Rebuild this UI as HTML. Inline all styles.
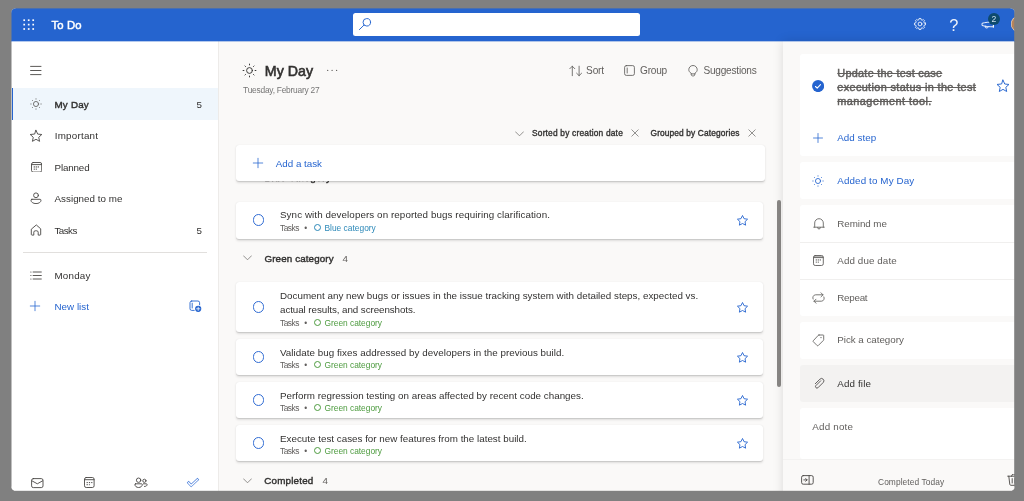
<!DOCTYPE html>
<html lang="en">
<head>
<meta charset="utf-8">
<title>To Do</title>
<style>
html,body{margin:0;padding:0}
body{width:1024px;height:501px;overflow:hidden;background:#808080;position:relative;font-family:"Liberation Sans",sans-serif}
#clip{position:absolute;left:11px;top:8px;width:1004px;height:483px;overflow:hidden;border-radius:5.5px;will-change:transform}
#win{position:absolute;left:-11px;top:-8px;width:1024px;height:501px;background:#faf9f8}
.edge{position:absolute;background:#808080}
.abs{position:absolute}
.t{position:absolute;white-space:pre;line-height:20px;height:20px;text-decoration-thickness:0.8px}
#hdr{position:absolute;left:0;top:0;width:1024px;height:41.3px;background:#2564cf}
#search{position:absolute;left:353px;top:13px;width:286.5px;height:22.5px;background:#fff;border-radius:2.5px}
#side{position:absolute;left:0;top:41px;width:218.2px;height:460px;background:#fff}
#sel{position:absolute;left:11.5px;top:88.3px;width:207px;height:31.7px;background:#eff6fc}
#selbar{position:absolute;left:11.5px;top:88.3px;width:1.6px;height:31.7px;background:#2564cf}
#sdiv{position:absolute;left:23px;top:252px;width:184px;height:1px;background:#e1dfdd}
#main{position:absolute;left:218.2px;top:41px;width:564px;height:460px;background:#faf9f8;border-left:1px solid #edebe9;box-sizing:border-box}
.card{position:absolute;background:#fff;border-radius:3px;box-shadow:0 1.1px 2.5px rgba(0,0,0,.11),0 0.2px 0.7px rgba(0,0,0,.1)}
.circ{position:absolute;width:11.5px;height:11.5px;box-sizing:border-box;border:0.95px solid #2f6bd3;border-radius:50%}
#dpanel{position:absolute;left:782.5px;top:41px;width:242px;height:460px;background:#faf9f8;box-shadow:0 0 10px rgba(0,0,0,.13)}
.dcard{position:absolute;left:800px;width:224px;background:#fff;border-radius:3px}
.ddiv{position:absolute;left:800px;width:224px;height:1px;background:#f0efee}
#scroll{position:absolute;left:777.3px;top:200px;width:3.4px;height:186.5px;background:#8a8886;border-radius:2px}
</style>
</head>
<body>
<div id="clip"><div id="win">
<div id="hdr"></div>
<div class="abs" style="left:0;top:41px;width:1024px;height:1px;background:#2564cf;opacity:.35;z-index:5"></div>
<div id="search"></div>
<div id="side"></div>
<div id="sel"></div><div id="selbar"></div><div id="sdiv"></div>
<div id="main"></div>
<!--ADDTASK-->
<div class="abs" style="left:236px;top:181px;width:529px;height:8px;overflow:hidden"><span class="t" style="left:28.5px;top:-13.2px;font-size:9.8px;font-weight:400;-webkit-text-stroke:0.4px #323130;color:#323130;letter-spacing:0.55px">Blue category</span></div>
<div class="card" style="left:236px;top:145px;width:529px;height:36px"></div>
<div class="card" style="left:236px;top:202px;width:527px;height:36.7px"></div>
<div class="circ" style="left:252.64999999999998px;top:214.29999999999998px"></div>
<svg class="abs" style="left:735.5px;top:213.85px" width="13" height="13" viewBox="0 0 20 20"><path d="M10 2.3l2.4 4.9 5.4.8-3.9 3.8.9 5.4L10 14.6l-4.8 2.6.9-5.4L2.2 8l5.4-.8z" fill="none" stroke="#2564cf" stroke-width="1.4" stroke-linejoin="round"/></svg>
<div class="abs" style="left:314px;top:224.2px;width:7px;height:7px;box-sizing:border-box;border:1px solid #2b88b8;border-radius:50%"></div>
<div class="card" style="left:236px;top:282.45px;width:527px;height:50px"></div>
<div class="circ" style="left:252.64999999999998px;top:301.4px"></div>
<svg class="abs" style="left:735.5px;top:300.95px" width="13" height="13" viewBox="0 0 20 20"><path d="M10 2.3l2.4 4.9 5.4.8-3.9 3.8.9 5.4L10 14.6l-4.8 2.6.9-5.4L2.2 8l5.4-.8z" fill="none" stroke="#2564cf" stroke-width="1.4" stroke-linejoin="round"/></svg>
<div class="abs" style="left:314px;top:318.65px;width:7px;height:7px;box-sizing:border-box;border:1px solid #4d9b3f;border-radius:50%"></div>
<div class="card" style="left:236px;top:339.2px;width:527px;height:36.3px"></div>
<div class="circ" style="left:252.64999999999998px;top:351.29999999999995px"></div>
<svg class="abs" style="left:735.5px;top:350.84999999999997px" width="13" height="13" viewBox="0 0 20 20"><path d="M10 2.3l2.4 4.9 5.4.8-3.9 3.8.9 5.4L10 14.6l-4.8 2.6.9-5.4L2.2 8l5.4-.8z" fill="none" stroke="#2564cf" stroke-width="1.4" stroke-linejoin="round"/></svg>
<div class="abs" style="left:314px;top:361.4px;width:7px;height:7px;box-sizing:border-box;border:1px solid #4d9b3f;border-radius:50%"></div>
<div class="card" style="left:236px;top:382.2px;width:527px;height:36.3px"></div>
<div class="circ" style="left:252.64999999999998px;top:394.29999999999995px"></div>
<svg class="abs" style="left:735.5px;top:393.84999999999997px" width="13" height="13" viewBox="0 0 20 20"><path d="M10 2.3l2.4 4.9 5.4.8-3.9 3.8.9 5.4L10 14.6l-4.8 2.6.9-5.4L2.2 8l5.4-.8z" fill="none" stroke="#2564cf" stroke-width="1.4" stroke-linejoin="round"/></svg>
<div class="abs" style="left:314px;top:404.4px;width:7px;height:7px;box-sizing:border-box;border:1px solid #4d9b3f;border-radius:50%"></div>
<div class="card" style="left:236px;top:425.2px;width:527px;height:36.3px"></div>
<div class="circ" style="left:252.64999999999998px;top:437.29999999999995px"></div>
<svg class="abs" style="left:735.5px;top:436.84999999999997px" width="13" height="13" viewBox="0 0 20 20"><path d="M10 2.3l2.4 4.9 5.4.8-3.9 3.8.9 5.4L10 14.6l-4.8 2.6.9-5.4L2.2 8l5.4-.8z" fill="none" stroke="#2564cf" stroke-width="1.4" stroke-linejoin="round"/></svg>
<div class="abs" style="left:314px;top:447.4px;width:7px;height:7px;box-sizing:border-box;border:1px solid #4d9b3f;border-radius:50%"></div>
<div id="scroll"></div>
<div id="dpanel"></div>
<div class="dcard" style="top:53.8px;height:102px"></div>
<div class="dcard" style="top:162px;height:36.8px"></div>
<div class="dcard" style="top:205px;height:111.3px"></div>
<div class="ddiv" style="top:242px"></div>
<div class="ddiv" style="top:279px"></div>
<div class="dcard" style="top:321.8px;height:37px"></div>
<div class="dcard" style="top:364.5px;height:37px;background:#f3f2f1"></div>
<div class="dcard" style="top:408px;height:51px"></div>
<div class="abs" style="left:782.5px;top:459.3px;width:242px;height:1px;background:#f3f2f1"></div>
<svg class="abs" style="left:22.6px;top:18.5px" width="12" height="12" viewBox="0 0 12 12" fill="none" stroke-linecap="round" stroke-linejoin="round"><rect x="0.35" y="0.35" width="1.7" height="1.7" fill="#fff"/><rect x="0.35" y="4.75" width="1.7" height="1.7" fill="#fff"/><rect x="0.35" y="9.15" width="1.7" height="1.7" fill="#fff"/><rect x="4.85" y="0.35" width="1.7" height="1.7" fill="#fff"/><rect x="4.85" y="4.75" width="1.7" height="1.7" fill="#fff"/><rect x="4.85" y="9.15" width="1.7" height="1.7" fill="#fff"/><rect x="9.35" y="0.35" width="1.7" height="1.7" fill="#fff"/><rect x="9.35" y="4.75" width="1.7" height="1.7" fill="#fff"/><rect x="9.35" y="9.15" width="1.7" height="1.7" fill="#fff"/></svg>
<svg class="abs" style="left:356px;top:14px" width="18" height="18" viewBox="0 0 18 18" fill="none" stroke-linecap="round" stroke-linejoin="round"><circle cx="10.8" cy="8.3" r="3.75" stroke="#2564cf" stroke-width="0.95"/><path d="M8 11.1L3.4 15.6" stroke="#2564cf" stroke-width="0.95"/></svg>
<svg class="abs" style="left:912.7px;top:17px" width="14" height="14" viewBox="0 0 14 14" fill="none" stroke-linecap="round" stroke-linejoin="round"><path d="M12.53 6.12L12.53 7.88L11.26 8.09L10.79 9.24L11.53 10.29L10.29 11.53L9.24 10.79L8.09 11.26L7.88 12.53L6.12 12.53L5.91 11.26L4.76 10.79L3.71 11.53L2.47 10.29L3.21 9.24L2.74 8.09L1.47 7.88L1.47 6.12L2.74 5.91L3.21 4.76L2.47 3.71L3.71 2.47L4.76 3.21L5.91 2.74L6.12 1.47L7.88 1.47L8.09 2.74L9.24 3.21L10.29 2.47L11.53 3.71L10.79 4.76L11.26 5.91Z" stroke="#fff" stroke-width="0.85"/><circle cx="7" cy="7" r="1.9" stroke="#fff" stroke-width="0.85"/></svg>
<svg class="abs" style="left:980px;top:16px" width="18" height="16" viewBox="0 0 18 16" fill="none" stroke-linecap="round" stroke-linejoin="round"><path d="M2.4 7.2C5 6.400 9 6 13.400 6V10.800C9 10.800 5 10.400 2.400 9.600Z" stroke="#fff" stroke-width="0.9"/><path d="M5.2 10.1v1.1c0 .9 2.6 1.3 3 .1" stroke="#fff" stroke-width="0.9"/><path d="M13.4 8v3.4" stroke="#fff" stroke-width="0.9"/></svg>
<div class="abs" style="left:988px;top:13px;width:11.8px;height:11.8px;border-radius:50%;background:#0d4a6e"></div>
<div class="abs" style="left:1011.2px;top:16.2px;width:15.6px;height:15.6px;border-radius:50%;background:#b5835a;box-shadow:inset 0 0 0 0.6px #e8d5c4"></div>
<svg class="abs" style="left:30px;top:65px" width="12" height="11" viewBox="0 0 12 11" fill="none" stroke-linecap="round" stroke-linejoin="round"><path d="M0.2 1.4h11.2M0.2 5.5h11.2M0.2 9.6h11.2" stroke="#484644" stroke-width="0.9" stroke-linecap="butt"/></svg>
<svg class="abs" style="left:29.700000000000003px;top:98px" width="12" height="12" viewBox="0 0 12 12" fill="none" stroke-linecap="round" stroke-linejoin="round"><circle cx="6" cy="6" r="2.55" stroke="#605e5c" stroke-width="0.85"/><path d="M10.50 6.00L11.60 6.00M9.18 9.18L9.96 9.96M6.00 10.50L6.00 11.60M2.82 9.18L2.04 9.96M1.50 6.00L0.40 6.00M2.82 2.82L2.04 2.04M6.00 1.50L6.00 0.40M9.18 2.82L9.96 2.04" stroke="#605e5c" stroke-width="0.85" stroke-linecap="butt"/></svg>
<svg class="abs" style="left:242.3px;top:62.900000000000006px" width="15.0" height="15.0" viewBox="0 0 15.0 15.0" fill="none" stroke-linecap="round" stroke-linejoin="round"><circle cx="7.5" cy="7.5" r="2.9" stroke="#323130" stroke-width="0.95"/><path d="M12.70 7.50L14.30 7.50M11.18 11.18L12.31 12.31M7.50 12.70L7.50 14.30M3.82 11.18L2.69 12.31M2.30 7.50L0.70 7.50M3.82 3.82L2.69 2.69M7.50 2.30L7.50 0.70M11.18 3.82L12.31 2.69" stroke="#323130" stroke-width="0.95" stroke-linecap="butt"/></svg>
<svg class="abs" style="left:812.4px;top:174.6px" width="12" height="12" viewBox="0 0 12 12" fill="none" stroke-linecap="round" stroke-linejoin="round"><circle cx="6" cy="6" r="2.55" stroke="#2564cf" stroke-width="0.85"/><path d="M10.50 6.00L11.60 6.00M9.18 9.18L9.96 9.96M6.00 10.50L6.00 11.60M2.82 9.18L2.04 9.96M1.50 6.00L0.40 6.00M2.82 2.82L2.04 2.04M6.00 1.50L6.00 0.40M9.18 2.82L9.96 2.04" stroke="#2564cf" stroke-width="0.85" stroke-linecap="butt"/></svg>
<svg class="abs" style="left:28.700000000000003px;top:128.8px" width="14" height="14" viewBox="0 0 14 14" fill="none" stroke-linecap="round" stroke-linejoin="round"><path d="M7.00 1.30L8.69 5.08L12.80 5.51L9.73 8.29L10.59 12.34L7.00 10.27L3.41 12.34L4.27 8.29L1.20 5.51L5.31 5.08Z" stroke="#484644" stroke-width="0.9"/></svg>
<svg class="abs" style="left:30.5px;top:161.9px" width="11.2" height="10.6" viewBox="0 0 11.2 10.6" fill="none" stroke-linecap="round" stroke-linejoin="round"><rect x="0.5" y="0.5" width="10.2" height="9.6" rx="1.7" stroke="#484644" stroke-width="0.9"/><path d="M0.5 2.6H10.7" stroke="#484644" stroke-width="0.9"/><circle cx="3.3" cy="4.9" r="0.7" fill="#484644"/><circle cx="5.3" cy="4.9" r="0.7" fill="#484644"/><circle cx="7.3" cy="4.9" r="0.7" fill="#484644"/><circle cx="3.3" cy="7.1" r="0.7" fill="#484644"/><circle cx="5.3" cy="7.1" r="0.7" fill="#484644"/></svg>
<svg class="abs" style="left:813px;top:255px" width="10.8" height="11" viewBox="0 0 10.8 11" fill="none" stroke-linecap="round" stroke-linejoin="round"><rect x="0.5" y="0.5" width="9.8" height="10" rx="1.7" stroke="#605e5c" stroke-width="0.9"/><path d="M0.5 2.6H10.3" stroke="#605e5c" stroke-width="0.9"/><rect x="0.9" y="0.9" width="9.0" height="1.6" fill="#605e5c" opacity="0.45"/><circle cx="3.3" cy="4.9" r="0.7" fill="#605e5c"/><circle cx="5.3" cy="4.9" r="0.7" fill="#605e5c"/><circle cx="7.3" cy="4.9" r="0.7" fill="#605e5c"/><circle cx="3.3" cy="7.1" r="0.7" fill="#605e5c"/><circle cx="5.3" cy="7.1" r="0.7" fill="#605e5c"/></svg>
<svg class="abs" style="left:29.7px;top:192px" width="12.0" height="12.0" viewBox="0 0 12 12" fill="none" stroke-linecap="round" stroke-linejoin="round"><circle cx="6" cy="3.3" r="2.4" stroke="#484644" stroke-width="0.9"/><path d="M1.9 7.3h8.2c.5 0 .9.4.9.9c0 2-2.2 3.4-5 3.4s-5-1.400-5-3.4c0-.5.400-.9.900-.9z" stroke="#484644" stroke-width="0.9"/></svg>
<svg class="abs" style="left:29.7px;top:223.5px" width="12" height="12" viewBox="0 0 12 12" fill="none" stroke-linecap="round" stroke-linejoin="round"><path d="M6 1.200L1.300 5.200V10.400c0 .4.300.7.700.7H3.800V8.200c0-.8.600-1.400 1.400-1.400H6.800c.8 0 1.400.600 1.400 1.400V11.100H10c.4 0 .7-.3.700-.7V5.200Z" stroke="#484644" stroke-width="0.9"/></svg>
<svg class="abs" style="left:30px;top:270.5px" width="12" height="9" viewBox="0 0 12 9" fill="none" stroke-linecap="round" stroke-linejoin="round"><path d="M3.1 1h8.200M3.100 4.500h8.200M3.100 8h8.200" stroke="#484644" stroke-width="0.9"/><circle cx="0.900" cy="1" r="0.6" fill="#484644"/><circle cx="0.9" cy="4.5" r="0.6" fill="#484644"/><circle cx="0.9" cy="8" r="0.6" fill="#484644"/></svg>
<svg class="abs" style="left:29.4px;top:300.2px" width="12" height="12" viewBox="0 0 12 12" fill="none" stroke-linecap="round" stroke-linejoin="round"><path d="M0.9000000000000004 6H11.1M6 0.9000000000000004V11.1" stroke="#2564cf" stroke-width="0.78" stroke-linecap="butt"/></svg>
<svg class="abs" style="left:252.10000000000002px;top:157.2px" width="12" height="12" viewBox="0 0 12 12" fill="none" stroke-linecap="round" stroke-linejoin="round"><path d="M0.9000000000000004 6H11.1M6 0.9000000000000004V11.1" stroke="#2564cf" stroke-width="0.78" stroke-linecap="butt"/></svg>
<svg class="abs" style="left:812.1px;top:131.5px" width="12" height="12" viewBox="0 0 12 12" fill="none" stroke-linecap="round" stroke-linejoin="round"><path d="M1.0999999999999996 6H10.9M6 1.0999999999999996V10.9" stroke="#2564cf" stroke-width="0.78" stroke-linecap="butt"/></svg>
<svg class="abs" style="left:188.5px;top:299.5px" width="14" height="14" viewBox="0 0 14 14" fill="none" stroke-linecap="round" stroke-linejoin="round"><rect x="1" y="1" width="9.600" height="9.400" rx="1.7" stroke="#2564cf" stroke-width="0.9"/><path d="M3.200 3.200V8" stroke="#2564cf" stroke-width="0.9"/><circle cx="9.200" cy="8.800" r="3.900" fill="#fff"/><circle cx="9.200" cy="8.800" r="3.100" fill="#2564cf"/><path d="M7.600 8.800h3.200M9.200 7.200v3.200" stroke="#fff" stroke-width="0.800"/></svg>
<svg class="abs" style="left:30.7px;top:477.7px" width="13" height="11" viewBox="0 0 13 11" fill="none" stroke-linecap="round" stroke-linejoin="round"><rect x="0.6" y="0.6" width="11.400" height="9" rx="1.700" stroke="#484644" stroke-width="0.9"/><path d="M0.900 2.800L6.300 5.800L11.700 2.800" stroke="#484644" stroke-width="0.9"/></svg>
<svg class="abs" style="left:83.6px;top:476.8px" width="11" height="12" viewBox="0 0 11 12" fill="none" stroke-linecap="round" stroke-linejoin="round"><rect x="0.5" y="0.5" width="9.600" height="10" rx="1.700" stroke="#484644" stroke-width="0.9"/><path d="M0.500 2.700H10.100" stroke="#484644" stroke-width="0.9"/><path d="M2.600 5.600H8.400M2.600 7.700H5.800" stroke="#484644" stroke-width="1" stroke-dasharray="1.200 1.100" stroke-linecap="butt"/></svg>
<svg class="abs" style="left:134px;top:476.8px" width="14" height="12" viewBox="0 0 14 12" fill="none" stroke-linecap="round" stroke-linejoin="round"><circle cx="4.600" cy="3.200" r="2.200" stroke="#484644" stroke-width="0.9"/><path d="M1.600 6.800H7.600c.4 0 .7.300.7.700c0 1.700-1.600 3-3.700 3s-3.700-1.300-3.700-3c0-.4.300-.7.700-.7z" stroke="#484644" stroke-width="0.9"/><circle cx="10.400" cy="3.800" r="1.600" stroke="#484644" stroke-width="0.9"/><path d="M9.400 6.800h3c.4 0 .7.300.7.700c0 1.200-1 2-2.600 2" stroke="#484644" stroke-width="0.9"/></svg>
<svg class="abs" style="left:186px;top:477px" width="14" height="12" viewBox="0 0 14 12" fill="none" stroke-linecap="round" stroke-linejoin="round"><path d="M2.600 5.700L5.200 8.500L11.400 2.700" stroke="#4a7fdb" stroke-width="2.600" stroke-linecap="square" stroke-linejoin="miter"/><path d="M2.600 5.700L5.200 8.500L11.400 2.700" stroke="#fff" stroke-width="1.250" stroke-linecap="square" stroke-linejoin="miter"/></svg>
<svg class="abs" style="left:326px;top:69px" width="13" height="3" viewBox="0 0 13 3"><circle cx="1.7" cy="1.400" r="0.65" fill="#605e5c"/><circle cx="6.100" cy="1.400" r="0.65" fill="#605e5c"/><circle cx="10.600" cy="1.400" r="0.65" fill="#605e5c"/></svg>
<svg class="abs" style="left:569px;top:65.1px" width="14" height="12" viewBox="0 0 14 12" fill="none" stroke-linecap="round" stroke-linejoin="round"><path d="M3.300 10.700V1.200M0.800 3.700L3.300 1.200L5.800 3.700M10.100 1.200V10.700M7.600 8.200L10.100 10.700L12.600 8.200" stroke="#605e5c" stroke-width="0.85"/></svg>
<svg class="abs" style="left:624.3px;top:65.4px" width="11" height="11" viewBox="0 0 11 11" fill="none" stroke-linecap="round" stroke-linejoin="round"><rect x="0.6" y="0.6" width="9.800" height="9.800" rx="1.700" stroke="#605e5c" stroke-width="0.85"/><path d="M3.200 3V8" stroke="#605e5c" stroke-width="0.85"/></svg>
<svg class="abs" style="left:688px;top:65px" width="10" height="12" viewBox="0 0 10 12" fill="none" stroke-linecap="round" stroke-linejoin="round"><path d="M3 8.200C1.600 7.300 0.800 6.100 0.800 4.700a4.200 4.200 0 0 1 8.400 0C9.200 6.100 8.400 7.300 7 8.200L6.700 9.900c-.1.600-.5 1-1.100 1H4.400c-.6 0-1-.4-1.100-1Z M3.200 8.900H6.800" stroke="#605e5c" stroke-width="0.85"/></svg>
<svg class="abs" style="left:515.2px;top:130.5px" width="9" height="6" viewBox="0 0 9 6" fill="none" stroke-linecap="round" stroke-linejoin="round"><path d="M0.500 0.800L4.500 4.800L8.500 0.800" stroke="#797775" stroke-width="0.8"/></svg>
<svg class="abs" style="left:242.8px;top:255.3px" width="9" height="6" viewBox="0 0 9 6" fill="none" stroke-linecap="round" stroke-linejoin="round"><path d="M0.500 0.800L4.500 4.800L8.500 0.800" stroke="#797775" stroke-width="0.8"/></svg>
<svg class="abs" style="left:242.8px;top:478.3px" width="9" height="6" viewBox="0 0 9 6" fill="none" stroke-linecap="round" stroke-linejoin="round"><path d="M0.500 0.800L4.500 4.800L8.500 0.800" stroke="#797775" stroke-width="0.8"/></svg>
<svg class="abs" style="left:631.4px;top:129.2px" width="8" height="8" viewBox="0 0 8 8" fill="none" stroke-linecap="round" stroke-linejoin="round"><path d="M0.800 0.800L7.200 7.200M7.200 0.800L0.800 7.200" stroke="#797775" stroke-width="0.8"/></svg>
<svg class="abs" style="left:748px;top:129.2px" width="8" height="8" viewBox="0 0 8 8" fill="none" stroke-linecap="round" stroke-linejoin="round"><path d="M0.800 0.800L7.200 7.200M7.200 0.800L0.800 7.200" stroke="#797775" stroke-width="0.8"/></svg>
<svg class="abs" style="left:812.3px;top:79.900px" width="12.200" height="12.200" viewBox="0 0 12.2 12.2" fill="none"><circle cx="6.100" cy="6.100" r="6.050" fill="#2564cf"/><path d="M3.500 6.500L5.200 8.100L8.500 4.600" stroke="#fff" stroke-width="1.100" stroke-linecap="round" stroke-linejoin="round"/></svg>
<svg class="abs" style="left:996.3px;top:79.4px" width="14" height="14" viewBox="0 0 14 14" fill="none" stroke-linecap="round" stroke-linejoin="round"><path d="M7.00 1.10L8.74 5.00L12.99 5.45L9.82 8.31L10.70 12.50L7.00 10.36L3.30 12.50L4.18 8.31L1.01 5.45L5.26 5.00Z" stroke="#2564cf" stroke-width="0.95"/></svg>
<svg class="abs" style="left:812.6px;top:217.5px" width="12" height="13" viewBox="0 0 12 13" fill="none" stroke-linecap="round" stroke-linejoin="round"><path d="M1.700 9.200V5a4.300 4.300 0 0 1 8.600 0V9.200M0.700 9.200H11.300M4.600 9.600a1.400 1.400 0 0 0 2.800 0" stroke="#605e5c" stroke-width="0.85"/></svg>
<svg class="abs" style="left:811.8px;top:291.5px" width="13" height="12" viewBox="0 0 13 12" fill="none" stroke-linecap="round" stroke-linejoin="round"><path d="M9 0.800L11 2.800L9 4.800M11 2.800H3.600A2.900 2.900 0 0 0 1.100 7.100M4 11.200L2 9.200L4 7.200M2 9.200H9.400A2.900 2.900 0 0 0 11.900 4.900" stroke="#605e5c" stroke-width="0.85"/></svg>
<svg class="abs" style="left:812px;top:334px" width="13" height="13" viewBox="0 0 13 13" fill="none" stroke-linecap="round" stroke-linejoin="round"><path d="M7 1H11.200c.3 0 .5.200.5.500V5.700c0 .3-.1.500-.3.700L6.200 11.600c-.3.300-.700.300-1 0L1.300 7.700c-.3-.3-.3-.7 0-1L6.300 1.300C6.500 1.100 6.700 1 7 1Z" stroke="#605e5c" stroke-width="0.85"/><circle cx="9" cy="3.600" r="0.65" fill="#605e5c"/></svg>
<svg class="abs" style="left:812.5px;top:376.5px" width="13" height="13" viewBox="0 0 13 13" fill="none" stroke-linecap="round" stroke-linejoin="round"><path d="M2 6.400L6.600 1.900A2.300 2.300 0 0 1 9.900 5.200L4.600 10.500A1.500 1.500 0 0 1 2.500 8.400L7.400 3.500" stroke="#484644" stroke-width="0.85" transform="translate(0.3,0.3)"/></svg>
<svg class="abs" style="left:800.6px;top:475px" width="13" height="10" viewBox="0 0 13 10" fill="none" stroke-linecap="round" stroke-linejoin="round"><rect x="0.6" y="0.6" width="11.600" height="8.600" rx="1.600" stroke="#484644" stroke-width="0.9"/><path d="M8.100 0.600V9.200M2.800 4.900H6M4.700 3.500L6.100 4.900L4.700 6.300" stroke="#484644" stroke-width="0.9"/></svg>
<svg class="abs" style="left:1006.5px;top:473.5px" width="13" height="12" viewBox="0 0 13 12" fill="none" stroke-linecap="round" stroke-linejoin="round"><path d="M0.700 2.200H12.300M4.500 2.200a2 2 0 0 1 4 0M1.800 2.200L2.800 10.400c.1.500.5.900 1 .9H9.200c.5 0 .9-.4 1-.9L11.200 2.200M5.200 4.600V9M7.800 4.600V9" stroke="#484644" stroke-width="0.9"/></svg>
<span class="t" style="left:51.6px;top:15.28px;font-size:11.3px;font-weight:400;color:#ffffff;letter-spacing:0.097px;-webkit-text-stroke:0.47px #ffffff;">To Do</span>
<span class="t" style="left:54.5px;top:94.60px;font-size:9.8px;font-weight:400;color:#323130;letter-spacing:0.214px;-webkit-text-stroke:0.41px #323130;">My Day</span>
<span class="t" style="left:54.7px;top:126.10px;font-size:9.8px;font-weight:400;color:#323130;letter-spacing:0.245px;">Important</span>
<span class="t" style="left:54.5px;top:157.60px;font-size:9.8px;font-weight:400;color:#323130;letter-spacing:-0.138px;">Planned</span>
<span class="t" style="left:54.5px;top:189.10px;font-size:9.8px;font-weight:400;color:#323130;letter-spacing:0.033px;">Assigned to me</span>
<span class="t" style="left:54.5px;top:220.60px;font-size:9.8px;font-weight:400;color:#323130;letter-spacing:-0.559px;">Tasks</span>
<span class="t" style="left:54.5px;top:265.60px;font-size:9.8px;font-weight:400;color:#323130;letter-spacing:0.190px;">Monday</span>
<span class="t" style="left:54.5px;top:296.60px;font-size:9.8px;font-weight:400;color:#2564cf;letter-spacing:0.025px;">New list</span>
<span class="t" style="left:196.5px;top:94.60px;font-size:9.8px;font-weight:400;color:#323130;letter-spacing:-0.753px;">5</span>
<span class="t" style="left:196.5px;top:220.60px;font-size:9.8px;font-weight:400;color:#323130;letter-spacing:-0.753px;">5</span>
<span class="t" style="left:264.8px;top:61.38px;font-size:14.2px;font-weight:400;color:#323130;letter-spacing:0.034px;-webkit-text-stroke:0.60px #323130;">My Day</span>
<span class="t" style="left:243.1px;top:80.39px;font-size:8.4px;font-weight:400;color:#767676;letter-spacing:-0.235px;">Tuesday, February 27</span>
<span class="t" style="left:586.1px;top:61.10px;font-size:10.1px;font-weight:400;color:#605e5c;letter-spacing:-0.179px;">Sort</span>
<span class="t" style="left:640px;top:61.10px;font-size:10.1px;font-weight:400;color:#605e5c;letter-spacing:-0.212px;">Group</span>
<span class="t" style="left:703.4px;top:61.10px;font-size:10.1px;font-weight:400;color:#605e5c;letter-spacing:-0.215px;">Suggestions</span>
<span class="t" style="left:532px;top:123.09px;font-size:8.4px;font-weight:400;color:#323130;letter-spacing:0.191px;-webkit-text-stroke:0.35px #323130;">Sorted by creation date</span>
<span class="t" style="left:650.5px;top:123.09px;font-size:8.4px;font-weight:400;color:#323130;letter-spacing:0.115px;-webkit-text-stroke:0.35px #323130;">Grouped by Categories</span>
<span class="t" style="left:275.8px;top:153.80px;font-size:9.8px;font-weight:400;color:#2564cf;letter-spacing:-0.010px;">Add a task</span>
<span class="t" style="left:264.5px;top:248.60px;font-size:9.8px;font-weight:400;color:#323130;letter-spacing:0.119px;-webkit-text-stroke:0.41px #323130;">Green category</span>
<span class="t" style="left:342.5px;top:248.60px;font-size:9.8px;font-weight:400;color:#605e5c;letter-spacing:-0.453px;">4</span>
<span class="t" style="left:264.3px;top:471.00px;font-size:9.8px;font-weight:400;color:#323130;letter-spacing:0.201px;-webkit-text-stroke:0.41px #323130;">Completed</span>
<span class="t" style="left:322.5px;top:471.00px;font-size:9.8px;font-weight:400;color:#605e5c;letter-spacing:-0.453px;">4</span>
<span class="t" style="left:280px;top:205.40px;font-size:9.8px;font-weight:400;color:#323130;letter-spacing:0.086px;">Sync with developers on reported bugs requiring clarification.</span>
<span class="t" style="left:280px;top:218.09px;font-size:8.4px;font-weight:400;color:#605e5c;letter-spacing:-0.521px;">Tasks</span>
<span class="t" style="left:304.3px;top:218.09px;font-size:8.4px;font-weight:400;color:#605e5c;letter-spacing:-0.337px;">•</span>
<span class="t" style="left:324.5px;top:218.09px;font-size:8.4px;font-weight:400;color:#2b88b8;letter-spacing:0.006px;">Blue category</span>
<span class="t" style="left:280px;top:285.85px;font-size:9.8px;font-weight:400;color:#323130;letter-spacing:0.017px;">Document any new bugs or issues in the issue tracking system with detailed steps, expected vs.</span>
<span class="t" style="left:280px;top:299.85px;font-size:9.8px;font-weight:400;color:#323130;letter-spacing:-0.071px;">actual results, and screenshots.</span>
<span class="t" style="left:280px;top:312.54px;font-size:8.4px;font-weight:400;color:#605e5c;letter-spacing:-0.521px;">Tasks</span>
<span class="t" style="left:304.3px;top:312.54px;font-size:8.4px;font-weight:400;color:#605e5c;letter-spacing:-0.337px;">•</span>
<span class="t" style="left:324.5px;top:312.54px;font-size:8.4px;font-weight:400;color:#4d9b3f;letter-spacing:-0.017px;">Green category</span>
<span class="t" style="left:280px;top:342.60px;font-size:9.8px;font-weight:400;color:#323130;letter-spacing:0.045px;">Validate bug fixes addressed by developers in the previous build.</span>
<span class="t" style="left:280px;top:355.29px;font-size:8.4px;font-weight:400;color:#605e5c;letter-spacing:-0.521px;">Tasks</span>
<span class="t" style="left:304.3px;top:355.29px;font-size:8.4px;font-weight:400;color:#605e5c;letter-spacing:-0.337px;">•</span>
<span class="t" style="left:324.5px;top:355.29px;font-size:8.4px;font-weight:400;color:#4d9b3f;letter-spacing:-0.017px;">Green category</span>
<span class="t" style="left:280px;top:385.60px;font-size:9.8px;font-weight:400;color:#323130;letter-spacing:0.016px;">Perform regression testing on areas affected by recent code changes.</span>
<span class="t" style="left:280px;top:398.29px;font-size:8.4px;font-weight:400;color:#605e5c;letter-spacing:-0.521px;">Tasks</span>
<span class="t" style="left:304.3px;top:398.29px;font-size:8.4px;font-weight:400;color:#605e5c;letter-spacing:-0.337px;">•</span>
<span class="t" style="left:324.5px;top:398.29px;font-size:8.4px;font-weight:400;color:#4d9b3f;letter-spacing:-0.017px;">Green category</span>
<span class="t" style="left:280px;top:428.60px;font-size:9.8px;font-weight:400;color:#323130;letter-spacing:0.010px;">Execute test cases for new features from the latest build.</span>
<span class="t" style="left:280px;top:441.29px;font-size:8.4px;font-weight:400;color:#605e5c;letter-spacing:-0.521px;">Tasks</span>
<span class="t" style="left:304.3px;top:441.29px;font-size:8.4px;font-weight:400;color:#605e5c;letter-spacing:-0.337px;">•</span>
<span class="t" style="left:324.5px;top:441.29px;font-size:8.4px;font-weight:400;color:#4d9b3f;letter-spacing:-0.017px;">Green category</span>
<span class="t" style="left:837.3px;top:63.22px;font-size:10.9px;font-weight:400;color:#605e5c;letter-spacing:0.255px;text-decoration:line-through;-webkit-text-stroke:0.46px #605e5c;">Update the test case</span>
<span class="t" style="left:837.3px;top:77.22px;font-size:10.9px;font-weight:400;color:#605e5c;letter-spacing:0.352px;text-decoration:line-through;-webkit-text-stroke:0.46px #605e5c;">execution status in the test</span>
<span class="t" style="left:837.3px;top:91.42px;font-size:10.9px;font-weight:400;color:#605e5c;letter-spacing:0.457px;text-decoration:line-through;-webkit-text-stroke:0.46px #605e5c;">management tool.</span>
<span class="t" style="left:837.3px;top:127.90px;font-size:9.8px;font-weight:400;color:#2564cf;letter-spacing:0.041px;">Add step</span>
<span class="t" style="left:837.3px;top:171.10px;font-size:9.8px;font-weight:400;color:#2564cf;letter-spacing:0.123px;">Added to My Day</span>
<span class="t" style="left:837.3px;top:214.10px;font-size:9.8px;font-weight:400;color:#605e5c;letter-spacing:-0.066px;">Remind me</span>
<span class="t" style="left:837.3px;top:251.10px;font-size:9.8px;font-weight:400;color:#605e5c;letter-spacing:0.100px;">Add due date</span>
<span class="t" style="left:837.3px;top:288.30px;font-size:9.8px;font-weight:400;color:#605e5c;letter-spacing:-0.266px;">Repeat</span>
<span class="t" style="left:837.3px;top:329.80px;font-size:9.8px;font-weight:400;color:#605e5c;letter-spacing:-0.032px;">Pick a category</span>
<span class="t" style="left:837.3px;top:374.10px;font-size:9.8px;font-weight:400;color:#323130;letter-spacing:0.139px;">Add file</span>
<span class="t" style="left:812.3px;top:417.20px;font-size:9.8px;font-weight:400;color:#605e5c;letter-spacing:0.196px;">Add note</span>
<span class="t" style="left:878px;top:471.59px;font-size:8.4px;font-weight:400;color:#605e5c;letter-spacing:0.078px;">Completed Today</span>
<span class="t" style="left:991.5px;top:9.02px;font-size:8.6px;font-weight:400;color:#cfe1ee;letter-spacing:0.019px;">2</span>
<span class="t" style="left:949.3px;top:14.52px;font-size:16.4px;font-weight:400;color:#ffffff;letter-spacing:-0.125px;opacity:.92;">?</span>
<div class="edge" style="left:11px;top:8px;width:1px;height:483px;opacity:.5"></div><div class="edge" style="left:11px;top:8px;width:1004px;height:1px;opacity:.4"></div><div class="edge" style="left:1014px;top:8px;width:1px;height:483px;opacity:.8"></div><div class="edge" style="left:11px;top:490px;width:1004px;height:1px;opacity:.2"></div>
</div></div>
</body>
</html>
